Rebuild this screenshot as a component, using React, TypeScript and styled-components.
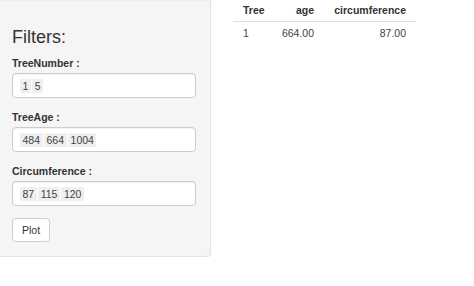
import React from "react";
import styled, { createGlobalStyle } from "styled-components";

const Global = createGlobalStyle`
  html, body { margin: 0; padding: 0; background: #fff; }
  body { font-family: "Liberation Sans", Arial, sans-serif; color: #333; }
`;

const Page = styled.div`
  display: flex;
  align-items: flex-start;
  gap: 22px;
`;

const Sidebar = styled.div`
  flex: 0 0 auto;
  width: 184px;
  padding: 27px 14px 14px 12px;
  background: #f5f5f5;
  border-right: 1px solid #e3e3e3;
  border-bottom: 1px solid #e3e3e3;
  border-bottom-right-radius: 4px;
  box-shadow: inset 0 1px 1px rgba(0, 0, 0, 0.03);
`;

const Heading = styled.h3`
  margin: 0 0 9px;
  font-size: 18px;
  line-height: 20px;
  font-weight: 400;
  color: #333;
`;

const Group = styled.div`
  margin-bottom: 12px;
`;

const Label = styled.label`
  display: block;
  font-size: 10.5px;
  line-height: 15px;
  font-weight: 700;
  margin-bottom: 2px;
  color: #333;
`;

const Input = styled.div`
  box-sizing: border-box;
  height: 25px;
  border: 1px solid #ccc;
  border-radius: 4px;
  background: #fff;
  padding: 5px 7px;
  display: flex;
  gap: 1.5px;
  align-items: center;
  box-shadow: inset 0 1px 1px rgba(0, 0, 0, 0.05);
`;

const Chip = styled.span`
  background: #efefef;
  color: #444;
  font-size: 10.5px;
  line-height: 14px;
  height: 14px;
  padding: 0 2.5px;
  border-radius: 1px;
`;

const Button = styled.button`
  box-sizing: border-box;
  height: 24px;
  padding: 0 9px;
  border: 1px solid #ccc;
  border-radius: 4px;
  background: #fff;
  color: #333;
  font-family: "Liberation Sans", Arial, sans-serif;
  font-size: 10.5px;
`;

const Table = styled.table`
  flex: 0 0 auto;
  border-collapse: collapse;
  table-layout: fixed;
  width: 183px;
  font-size: 10.5px;
  line-height: 15px;
`;

const Th = styled.th<{ $w: number; $align: string }>`
  box-sizing: border-box;
  width: ${(p) => p.$w}px;
  text-align: ${(p) => p.$align};
  font-weight: 700;
  padding: 3px 10px 3px;
  border-bottom: 1.5px solid #ddd;
  color: #333;
`;

const Td = styled.td<{ $align: string }>`
  text-align: ${(p) => p.$align};
  padding: 4px 10px;
  color: #444;
`;

const filters = [
  { label: "TreeNumber :", values: ["1", "5"] },
  { label: "TreeAge :", values: ["484", "664", "1004"] },
  { label: "Circumference :", values: ["87", "115", "120"] },
];

export default function App() {
  return (
    <>
      <Global />
      <Page>
        <Sidebar>
          <Heading>Filters:</Heading>
          {filters.map((f) => (
            <Group key={f.label}>
              <Label>{f.label}</Label>
              <Input>
                {f.values.map((v) => (
                  <Chip key={v}>{v}</Chip>
                ))}
              </Input>
            </Group>
          ))}
          <Button>Plot</Button>
        </Sidebar>
        <Table>
          <thead>
            <tr>
              <Th $w={38} $align="left">Tree</Th>
              <Th $w={53} $align="right">age</Th>
              <Th $w={92} $align="right">circumference</Th>
            </tr>
          </thead>
          <tbody>
            <tr>
              <Td $align="left">1</Td>
              <Td $align="right">664.00</Td>
              <Td $align="right">87.00</Td>
            </tr>
          </tbody>
        </Table>
      </Page>
    </>
  );
}
